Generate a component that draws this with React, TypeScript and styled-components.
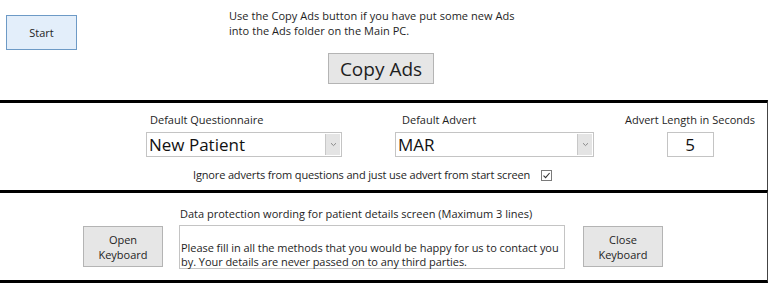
import React from "react";
import styled, { createGlobalStyle } from "styled-components";

const Global = createGlobalStyle`
  html, body { margin: 0; padding: 0; background: #ffffff; }
  body { font-family: "Open Sans", "Noto Sans", sans-serif; color: #1e1e1e; }
`;

const Page = styled.div`
  width: 768px;
  height: 288px;
  overflow: hidden;
  background: #fff;
`;

const TopSection = styled.div`
  height: 100px;
  display: flex;
  align-items: flex-start;
`;

const StartButton = styled.div`
  box-sizing: border-box;
  width: 71px;
  height: 35px;
  margin: 15px 0 0 6px;
  background: #e3eefa;
  border: 1px solid #6d9ac6;
  display: flex;
  align-items: center;
  justify-content: center;
  font-size: 11px;
`;

const InfoColumn = styled.div`
  margin: 8px 0 0 152px;
  display: flex;
  flex-direction: column;
`;

const InfoText = styled.div`
  font-size: 11px;
  line-height: 15px;
  width: 330px;
  letter-spacing: 0.05px;
`;

const GreyButton = styled.div<{ $w: number; $h: number; $size: number }>`
  box-sizing: border-box;
  width: ${(p) => p.$w}px;
  height: ${(p) => p.$h}px;
  background: #e6e6e6;
  border: 1px solid #b4b4b4;
  display: flex;
  align-items: center;
  justify-content: center;
  text-align: center;
  font-size: ${(p) => p.$size}px;
  line-height: ${(p) => Math.round(p.$size * 1.35)}px;
  color: #1e1e1e;
`;

const CopyWrap = styled.div`
  margin: 15px 0 0 99px;
`;

const Band = styled.div<{ $last?: boolean }>`
  box-sizing: border-box;
  width: 768px;
  height: ${(p) => (p.$last ? 93 : 90)}px;
  border-top: 3px solid #000;
  border-bottom: ${(p) => (p.$last ? "3px solid #000" : "none")};
  border-right: 1px solid #444;
`;

const FieldsRow = styled.div`
  display: flex;
  padding: 10px 0 0 146px;
`;

const Field = styled.div<{ $w: number; $ml: number; $center?: boolean }>`
  width: ${(p) => p.$w}px;
  margin-left: ${(p) => p.$ml}px;
  display: flex;
  flex-direction: column;
  align-items: ${(p) => (p.$center ? "center" : "stretch")};
`;

const Label = styled.div<{ $indent?: number; $gap?: number }>`
  font-size: 11px;
  line-height: 14px;
  padding-left: ${(p) => p.$indent ?? 0}px;
  margin-bottom: ${(p) => p.$gap ?? 5}px;
  white-space: nowrap;
`;

const Select = styled.div`
  box-sizing: border-box;
  height: 25px;
  border: 1px solid #c4c4c4;
  display: flex;
  align-items: stretch;
`;

const SelectValue = styled.div`
  flex: 1;
  font-size: 17px;
  line-height: 23px;
  padding-left: 2px;
  color: #111;
`;

const DropButton = styled.div`
  width: 14px;
  margin: 1px;
  background: #e4e4e4;
  border-left: 1px solid #c8c8c8;
  display: flex;
  align-items: center;
  justify-content: center;
`;

const NumberBox = styled.div`
  box-sizing: border-box;
  width: 47px;
  height: 25px;
  border: 1px solid #c4c4c4;
  font-size: 17px;
  line-height: 23px;
  text-align: center;
  color: #111;
`;

const CheckRow = styled.div`
  display: flex;
  align-items: center;
  padding: 11px 0 0 193px;
  font-size: 11px;
  line-height: 14px;
  letter-spacing: -0.15px;
`;

const CheckBox = styled.div`
  box-sizing: border-box;
  width: 11px;
  height: 11px;
  margin-left: 11px;
  border: 1px solid #7a7a7a;
  display: flex;
  align-items: center;
  justify-content: center;
`;

const BottomRow = styled.div`
  display: flex;
  align-items: flex-start;
  padding-left: 83px;
`;

const SideButtonWrap = styled.div<{ $ml: number }>`
  margin: 33px 0 0 ${(p) => p.$ml}px;
`;

const TextColumn = styled.div`
  margin: 14px 0 0 16px;
  display: flex;
  flex-direction: column;
`;

const TextArea = styled.div`
  box-sizing: border-box;
  width: 386px;
  height: 44px;
  border: 1px solid #c4c4c4;
  padding: 1px 0 0 1px;
  font-size: 11px;
  line-height: 14px;
  white-space: pre-wrap;
  letter-spacing: -0.05px;
`;

const Chevron = () => (
  <svg width="7" height="5" viewBox="0 0 7 5">
    <path d="M1 1.2 L3.5 3.6 L6 1.2" fill="none" stroke="#8a8a8a" strokeWidth="1" />
  </svg>
);

const Tick = () => (
  <svg width="9" height="9" viewBox="0 0 9 9">
    <path d="M1.5 4.6 L3.6 6.7 L7.6 2" fill="none" stroke="#333" strokeWidth="1.1" />
  </svg>
);

export default function App() {
  return (
    <Page>
      <Global />
      <TopSection>
        <StartButton>Start</StartButton>
        <InfoColumn>
          <InfoText>
            Use the Copy Ads button if you have put some new Ads
            <br />
            into the Ads folder on the Main PC.
          </InfoText>
          <CopyWrap>
            <GreyButton $w={106} $h={31} $size={19}>
              Copy Ads
            </GreyButton>
          </CopyWrap>
        </InfoColumn>
      </TopSection>

      <Band>
        <FieldsRow>
          <Field $w={196} $ml={0}>
            <Label $indent={4}>Default Questionnaire</Label>
            <Select>
              <SelectValue>New Patient</SelectValue>
              <DropButton>
                <Chevron />
              </DropButton>
            </Select>
          </Field>
          <Field $w={199} $ml={53}>
            <Label $indent={7}>Default Advert</Label>
            <Select>
              <SelectValue>MAR</SelectValue>
              <DropButton>
                <Chevron />
              </DropButton>
            </Select>
          </Field>
          <Field $w={128} $ml={32} $center>
            <Label>Advert Length in Seconds</Label>
            <NumberBox>5</NumberBox>
          </Field>
        </FieldsRow>
        <CheckRow>
          Ignore adverts from questions and just use advert from start screen
          <CheckBox>
            <Tick />
          </CheckBox>
        </CheckRow>
      </Band>

      <Band $last>
        <BottomRow>
          <SideButtonWrap $ml={0}>
            <GreyButton $w={80} $h={41} $size={11}>
              Open
              <br />
              Keyboard
            </GreyButton>
          </SideButtonWrap>
          <TextColumn>
            <Label $indent={1} $gap={4}>
              Data protection wording for patient details screen (Maximum 3 lines)
            </Label>
            <TextArea>
              {"\nPlease fill in all the methods that you would be happy for us to contact you by. Your details are never passed on to any third parties."}
            </TextArea>
          </TextColumn>
          <SideButtonWrap $ml={18}>
            <GreyButton $w={80} $h={41} $size={11}>
              Close
              <br />
              Keyboard
            </GreyButton>
          </SideButtonWrap>
        </BottomRow>
      </Band>
    </Page>
  );
}
